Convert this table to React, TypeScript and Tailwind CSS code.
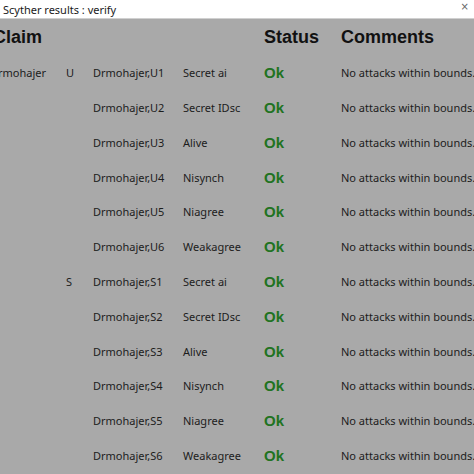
const rows = [
  { a: 'Drmohajer', b: 'U', c: 'Drmohajer,U1', d: 'Secret ai' },
  { a: '', b: '', c: 'Drmohajer,U2', d: 'Secret IDsc' },
  { a: '', b: '', c: 'Drmohajer,U3', d: 'Alive' },
  { a: '', b: '', c: 'Drmohajer,U4', d: 'Nisynch' },
  { a: '', b: '', c: 'Drmohajer,U5', d: 'Niagree' },
  { a: '', b: '', c: 'Drmohajer,U6', d: 'Weakagree' },
  { a: '', b: 'S', c: 'Drmohajer,S1', d: 'Secret ai' },
  { a: '', b: '', c: 'Drmohajer,S2', d: 'Secret IDsc' },
  { a: '', b: '', c: 'Drmohajer,S3', d: 'Alive' },
  { a: '', b: '', c: 'Drmohajer,S4', d: 'Nisynch' },
  { a: '', b: '', c: 'Drmohajer,S5', d: 'Niagree' },
  { a: '', b: '', c: 'Drmohajer,S6', d: 'Weakagree' },
];

const cols = 'grid grid-cols-[76px_27px_90px_81px_77px_1fr] items-center';

export default function App() {
  return (
    <div className="w-[474px] h-[474px] overflow-hidden bg-[#a9a9a9] font-['Noto_Sans',sans-serif]">
      <div className="h-[19px] bg-white flex items-center justify-between pl-[3px] pr-[5px] border-b border-[#d0d0d0]">
        <span className="text-[11px] leading-none text-[#1a1a1a]">Scyther results : verify</span>
        <span className="text-[10px] leading-none text-[#666] font-['DejaVu_Sans',sans-serif] -mt-[4px]">×</span>
      </div>
      <div className="ml-[-10px] whitespace-nowrap">
        <div className={`${cols} h-[37px] font-['Liberation_Sans',sans-serif] font-bold text-[18px] text-[#111]`}>
          <span className="col-span-4 pl-[3px]">Claim</span>
          <span>Status</span>
          <span>Comments</span>
        </div>
        {rows.map((r, i) => (
          <div key={i} className={`${cols} h-[34.8px] text-[11px] text-[#1c1c1c]`}>
            <span>{r.a}</span>
            <span>{r.b}</span>
            <span>{r.c}</span>
            <span>{r.d}</span>
            <span className="font-['Liberation_Sans',sans-serif] font-bold text-[15px] text-[#217321]">Ok</span>
            <span>No attacks within bounds.</span>
          </div>
        ))}
      </div>
    </div>
  );
}
